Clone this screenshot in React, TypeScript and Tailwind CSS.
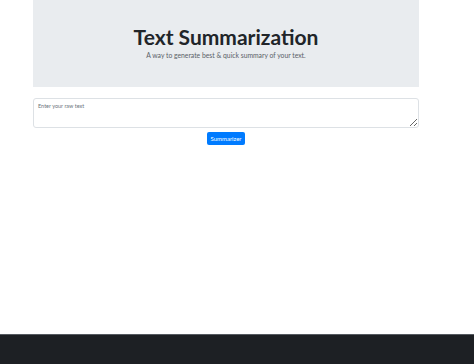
import React from "react";

export default function App() {
  return (
    <div className="flex min-h-[364px] flex-col bg-white font-['Lato',sans-serif] text-[#212529]">
      <div className="ml-[33px] flex h-[87px] w-[386px] flex-col items-center bg-[#e9ecef] pt-[24px]">
        <h1 className="text-[21px] font-bold leading-[26px]">Text Summarization</h1>
        <p className="text-[6.8px] leading-[10px] text-[#5a6168]">
          A way to generate best &amp; quick summary of your text.
        </p>
      </div>

      <div className="ml-[33px] mt-[11px] flex w-[386px] flex-col items-center">
        <textarea
          placeholder="Enter your raw text"
          className="h-[30px] w-full resize-y rounded-[3px] border border-[#dde1e5] px-[4px] py-[3px] text-[5.5px] leading-[8px] placeholder:text-[#6c757d] outline-none"
        />
        <button className="mt-[4px] h-[13px] w-[38px] rounded-[2px] bg-[#007bff] text-[6px] leading-[13px] text-white">
          Summarizer
        </button>
      </div>

      <div className="flex-1" />
      <div className="h-[30px] border-t border-[#555a60] bg-[#1d2024]" />
    </div>
  );
}
